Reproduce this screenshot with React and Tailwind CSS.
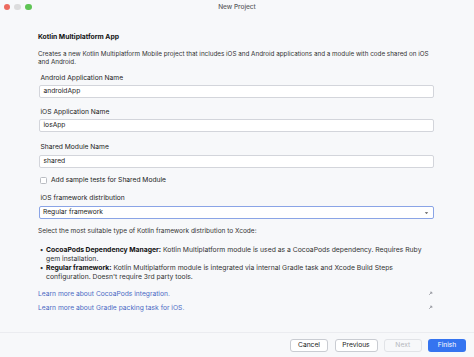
import React from "react";

const font = { fontFamily: "Inter, 'Noto Sans', sans-serif" };

function Label({ children, top }) {
  return (
    <div className={`${top} h-[8px] flex items-center text-[6.7px] text-[#222] pl-[2.5px] whitespace-nowrap`}>
      {children}
    </div>
  );
}

function Input({ value, top }) {
  return (
    <div className={`${top} ml-[1px] h-[13px] bg-white border border-[#d3d5db] rounded-[2px] flex items-center px-[3.5px] text-[6.7px] text-[#222]`}>
      {value}
    </div>
  );
}

function Arrow() {
  return (
    <svg width="5" height="5" viewBox="0 0 5 5" className="text-[#8a8d94] mr-[1px]">
      <path d="M1.2 3.8L3.6 1.4M2 1.2h1.8v1.8" stroke="currentColor" strokeWidth="0.8" fill="none" />
    </svg>
  );
}

export default function App() {
  return (
    <div className="w-[474px] h-[357px] bg-[#f7f8fa] flex flex-col overflow-hidden" style={font}>
      <div className="relative h-[15px] flex items-center justify-center shrink-0">
        <div className="absolute left-[3.5px] top-[3.5px] flex gap-[4.3px]">
          <div className="w-[6.5px] h-[6.5px] rounded-full bg-[#ec6a5f]" />
          <div className="w-[6.5px] h-[6.5px] rounded-full bg-[#dcdcdd]" />
          <div className="w-[6.5px] h-[6.5px] rounded-full bg-[#5fc455]" />
        </div>
        <div className="text-[6.5px] font-medium text-[#5a5c60]">New Project</div>
      </div>
      <div className="flex-1 pl-[38px] pr-[40px]">
        <div className="mt-[18px] h-[8px] flex items-center text-[6.8px] font-bold text-[#111] whitespace-nowrap">Kotlin Multiplatform App</div>
        <div className="mt-[9px] text-[6.3px] leading-[8px] text-[#333]">
          Creates a new Kotlin Multiplatform Mobile project that includes iOS and Android applications and a module with code shared on iOS and Android.
        </div>
        <Label top="mt-[8px]">Android Application Name</Label>
        <Input top="mt-[3px]" value="androidApp" />
        <Label top="mt-[10px]">iOS Application Name</Label>
        <Input top="mt-[3px]" value="iosApp" />
        <Label top="mt-[11px]">Shared Module Name</Label>
        <Input top="mt-[4px]" value="shared" />
        <div className="mt-[8px] h-[8px] flex items-center gap-[4px] pl-[2px]">
          <div className="w-[7px] h-[7px] bg-white border border-[#b9bcc2] rounded-[1.5px]" />
          <div className="text-[6.7px] text-[#222]">Add sample tests for Shared Module</div>
        </div>
        <Label top="mt-[10px]">iOS framework distribution</Label>
        <div className="mt-[4px] ml-[1px] h-[13px] bg-white border-[1.5px] border-[#8aa4e6] rounded-[2px] flex items-center justify-between pl-[3px] pr-[3px] text-[6.7px] text-[#222]">
          <span>Regular framework</span>
          <svg width="5" height="4" viewBox="0 0 5 4" className="mr-[1px]">
            <path d="M0.8 1.2h3.4L2.5 3z" fill="#555" />
          </svg>
        </div>
        <div className="mt-[7.5px] text-[6.5px] leading-[8px] text-[#333]">
          Select the most suitable type of Kotlin framework distribution to Xcode:
        </div>
        <ul className="mt-[10px] text-[6.8px] leading-[9.3px] text-[#333] pr-[3px]">
          <li className="flex">
            <span className="w-[8px] shrink-0 pl-[2px] font-bold">•</span>
            <span>
              <b className="text-[#111]">CocoaPods Dependency Manager:</b> Kotlin Multiplatform module is used as a CocoaPods dependency. Requires Ruby gem installation.
            </span>
          </li>
          <li className="flex">
            <span className="w-[8px] shrink-0 pl-[2px] font-bold">•</span>
            <span>
              <b className="text-[#111]">Regular framework:</b> Kotlin Multiplatform module is integrated via internal Gradle task and Xcode Build Steps configuration. Doesn't require 3rd party tools.
            </span>
          </li>
        </ul>
        <div className="mt-[8px] h-[8px] flex items-center justify-between text-[6.7px] text-[#4a6ac4]">
          <span>Learn more about CocoaPods integration.</span>
          <Arrow />
        </div>
        <div className="mt-[6px] h-[8px] flex items-center justify-between text-[6.7px] text-[#4a6ac4]">
          <span>Learn more about Gradle packing task for iOS.</span>
          <Arrow />
        </div>
      </div>
      <div className="h-[25px] border-t border-[#ebecf0] flex items-center justify-end gap-[6.5px] pr-[8px] shrink-0">
        <div className="w-[38px] h-[13px] bg-white border border-[#c9ccd2] rounded-[3px] flex items-center justify-center text-[6.7px] text-[#222]">Cancel</div>
        <div className="w-[43px] h-[13px] bg-white border border-[#c9ccd2] rounded-[3px] flex items-center justify-center text-[6.7px] text-[#222]">Previous</div>
        <div className="w-[37.5px] h-[13px] bg-[#f7f8fa] border border-[#e1e3e7] rounded-[3px] flex items-center justify-center text-[6.7px] text-[#b5b7bc]">Next</div>
        <div className="w-[38px] h-[13px] bg-[#3574f0] rounded-[3px] flex items-center justify-center text-[6.7px] text-white">Finish</div>
      </div>
    </div>
  );
}
